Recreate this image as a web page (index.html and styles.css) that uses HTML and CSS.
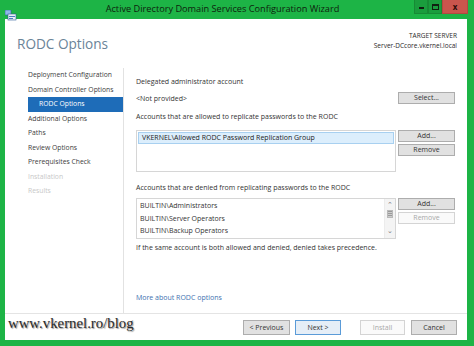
FILE: index.html
```html
<!DOCTYPE html>
<html lang="en">
<head>
  <meta charset="UTF-8" />
  <title>Active Directory Domain Services Configuration Wizard</title>
  <link rel="stylesheet" href="styles.css">
</head>
<body>

<div class="window">
  <div class="titlebar">
    <span class="app-icon">
      <svg width="12" height="11" viewBox="0 0 12 11">
        <rect x="0" y="0" width="6" height="5" fill="#8fb8e8" stroke="#2f5f9a" stroke-width="0.6"/>
        <rect x="3" y="4" width="8" height="6" fill="#e8eef6" stroke="#2f5f9a" stroke-width="0.6"/>
        <rect x="4" y="6" width="6" height="1" fill="#4a7cc0"/>
        <rect x="4" y="8" width="4" height="1" fill="#4a7cc0"/>
      </svg>
    </span>
    <span class="title">Active Directory Domain Services Configuration Wizard</span>
    <div class="controls">
      <span class="ctl ctl-min"><i></i></span>
      <span class="ctl ctl-max"><i></i></span>
      <span class="ctl ctl-close">x</span>
    </div>
  </div>

  <div class="client">
    <div class="header">
      <h1 class="page-title">RODC Options</h1>
      <div class="target">
        <div>TARGET SERVER</div>
        <div>Server-DCcore.vkernel.local</div>
      </div>
    </div>

    <div class="body">
      <ul class="nav">
        <li>Deployment Configuration</li>
        <li>Domain Controller Options</li>
        <li class="active">RODC Options</li>
        <li>Additional Options</li>
        <li>Paths</li>
        <li>Review Options</li>
        <li>Prerequisites Check</li>
        <li class="off">Installation</li>
        <li class="off">Results</li>
      </ul>

      <div class="main">
        <div class="label first">Delegated administrator account</div>
        <div class="row">
          <span class="value">&lt;Not provided&gt;</span>
          <button class="btn">Select...</button>
        </div>

        <div class="label second">Accounts that are allowed to replicate passwords to the RODC</div>
        <div class="group">
          <div class="list allowed">
            <div class="item selected">VKERNEL\Allowed RODC Password Replication Group</div>
          </div>
          <div class="side">
            <button class="btn">Add...</button>
            <button class="btn">Remove</button>
          </div>
        </div>

        <div class="label third">Accounts that are denied from replicating passwords to the RODC</div>
        <div class="group">
          <div class="list denied">
            <div class="items">
              <div class="item">BUILTIN\Administrators</div>
              <div class="item">BUILTIN\Server Operators</div>
              <div class="item">BUILTIN\Backup Operators</div>
            </div>
            <div class="scrollbar">
              <span class="arrow">&#8963;</span>
              <span class="thumb"></span>
              <span class="arrow down">&#8964;</span>
            </div>
          </div>
          <div class="side">
            <button class="btn">Add...</button>
            <button class="btn disabled">Remove</button>
          </div>
        </div>
        <div class="note">If the same account is both allowed and denied, denied takes precedence.</div>

        <a class="more" href="#">More about RODC options</a>
      </div>
    </div>

    <div class="footer">
      <button class="btn fbtn">&lt; Previous</button>
      <button class="btn fbtn next">Next &gt;</button>
      <button class="btn fbtn disabled install">Install</button>
      <button class="btn fbtn cancel">Cancel</button>
    </div>
  </div>

  <div class="watermark">www.vkernel.ro/blog</div>
</div>

</body>
</html>
```

FILE: styles.css
```css
body {
  margin: 0;
  padding: 0;
  background: #1db446;
  font-family: 'Open Sans', sans-serif;
  color: #1e1e1e;
}

.window {
  position: relative;
  width: 474px;
  height: 346px;
  background: #1db446;
  overflow: hidden;
}

.titlebar {
  display: flex;
  align-items: flex-start;
  height: 19px;
}

.app-icon {
  width: 12px;
  height: 11px;
  margin: 4px 0 0 5px;
}

.title {
  flex: 1;
  text-align: center;
  font-size: 9.2px;
  line-height: 10px;
  padding-top: 4px;
  padding-left: 14px;
  color: #0e220d;
}

.controls {
  display: flex;
  margin-right: 6px;
}

.ctl {
  display: flex;
  align-items: center;
  justify-content: center;
  height: 14px;
  width: 14px;
  background: #1a9d3d;
  border: 1px solid #178a35;
  border-top: none;
  box-sizing: border-box;
}

.ctl-min i {
  width: 5px;
  height: 2px;
  margin-top: 3px;
  background: #102010;
}

.ctl-max i {
  width: 5px;
  height: 3px;
  border: 1px solid #102010;
  border-top-width: 2px;
}

.ctl-close {
  width: 26px;
  background: #c9554d;
  border-color: #b34840;
  font-size: 8px;
  font-weight: bold;
  color: #2a0a08;
  line-height: 10px;
}

.client {
  display: flex;
  flex-direction: column;
  margin-left: 5px;
  width: 462px;
  height: 321px;
  background: #ffffff;
}

.header {
  display: flex;
  justify-content: space-between;
  height: 46px;
}

.page-title {
  margin: 0;
  padding: 16px 0 0 12px;
  font-size: 13.6px;
  line-height: 18px;
  font-weight: normal;
  color: #6a8498;
}

.target {
  padding: 12px 10px 0 0;
  text-align: right;
  font-size: 6.5px;
  line-height: 10px;
  color: #2a2a2a;
}

.body {
  display: flex;
  height: 248px;
}

.nav {
  list-style: none;
  margin: 3px 0 0 0;
  padding: 0 0 0 23px;
  width: 95px;
  border-right: 1px solid #e2e2e2;
  font-size: 6.8px;
  line-height: 14.5px;
  color: #3c3c3c;
  white-space: nowrap;
}

.nav li.active {
  background: #1e6cb8;
  color: #ffffff;
  padding-left: 11px;
}

.nav li.off {
  color: #c8c8c8;
}

.main {
  display: flex;
  flex-direction: column;
  flex: 1;
  padding: 0 12px 9px 12px;
  font-size: 7px;
  color: #333333;
}

.label {
  line-height: 12px;
  white-space: nowrap;
}

.label.first {
  margin-top: 11px;
}

.label.second {
  margin-top: 7px;
}

.label.third {
  margin-top: 10px;
}

.row {
  display: flex;
  justify-content: space-between;
  align-items: center;
  margin-top: 4px;
  height: 12px;
}

.btn {
  width: 57px;
  height: 12px;
  padding: 0;
  font-family: 'Open Sans', sans-serif;
  font-size: 7px;
  line-height: 10px;
  color: #333333;
  background: #e1e1e1;
  border: 1px solid #adadad;
}

.btn.disabled {
  background: #fafafa;
  border-color: #d4d4d4;
  color: #a8a8a8;
}

.group {
  display: flex;
  justify-content: space-between;
  margin-top: 7px;
}

.list {
  width: 260px;
  box-sizing: border-box;
  border: 1px solid #d6d6d6;
  background: #ffffff;
}

.list.allowed {
  height: 42px;
  padding: 1px;
}

.item {
  line-height: 12.5px;
  padding-left: 3px;
  white-space: nowrap;
}

.item.selected {
  background: #dceefc;
  border: 1px solid #a8d0f0;
  line-height: 10px;
  color: #222222;
}

.side {
  display: flex;
  flex-direction: column;
  gap: 2px;
}

.list.denied {
  display: flex;
  height: 41px;
}

.items {
  flex: 1;
  padding-top: 1px;
}

.scrollbar {
  display: flex;
  flex-direction: column;
  align-items: center;
  width: 10px;
  border-left: 1px solid #ececec;
  background: #f4f4f4;
  font-size: 7px;
  color: #7a7a7a;
}

.arrow {
  height: 10px;
  line-height: 12px;
}

.arrow.down {
  margin-top: auto;
  line-height: 6px;
}

.thumb {
  width: 6px;
  height: 8px;
  margin-top: 1px;
  background: repeating-linear-gradient(#9a9a9a 0 1px, #cdcdcd 1px 2px);
  border: 1px solid #b9b9b9;
  box-sizing: border-box;
}

.group + .label.third + .group {
  margin-top: 4px;
}

.note {
  margin-top: 3px;
  line-height: 12px;
  white-space: nowrap;
}

.more {
  margin-top: auto;
  line-height: 12px;
  color: #3e72b0;
  text-decoration: none;
}

.footer {
  display: flex;
  padding: 6px 10px 0 0;
  justify-content: flex-end;
  border-top: 1px solid #e4e4e4;
  height: 20px;
}

.fbtn {
  height: 15px;
  width: 47px;
}

.next {
  margin-left: 5px;
  width: 46px;
  background: #e5eef7;
  border-color: #5a9bd8;
}

.install {
  margin-left: 19px;
  width: 45px;
}

.cancel {
  margin-left: 6px;
  width: 46px;
}

.watermark {
  position: absolute;
  left: 8px;
  top: 315px;
  font-family: 'Liberation Serif', serif;
  font-size: 14.8px;
  color: #2a2a2a;
  text-shadow: 1px 1px 1px #9a9a9a;
}
```
